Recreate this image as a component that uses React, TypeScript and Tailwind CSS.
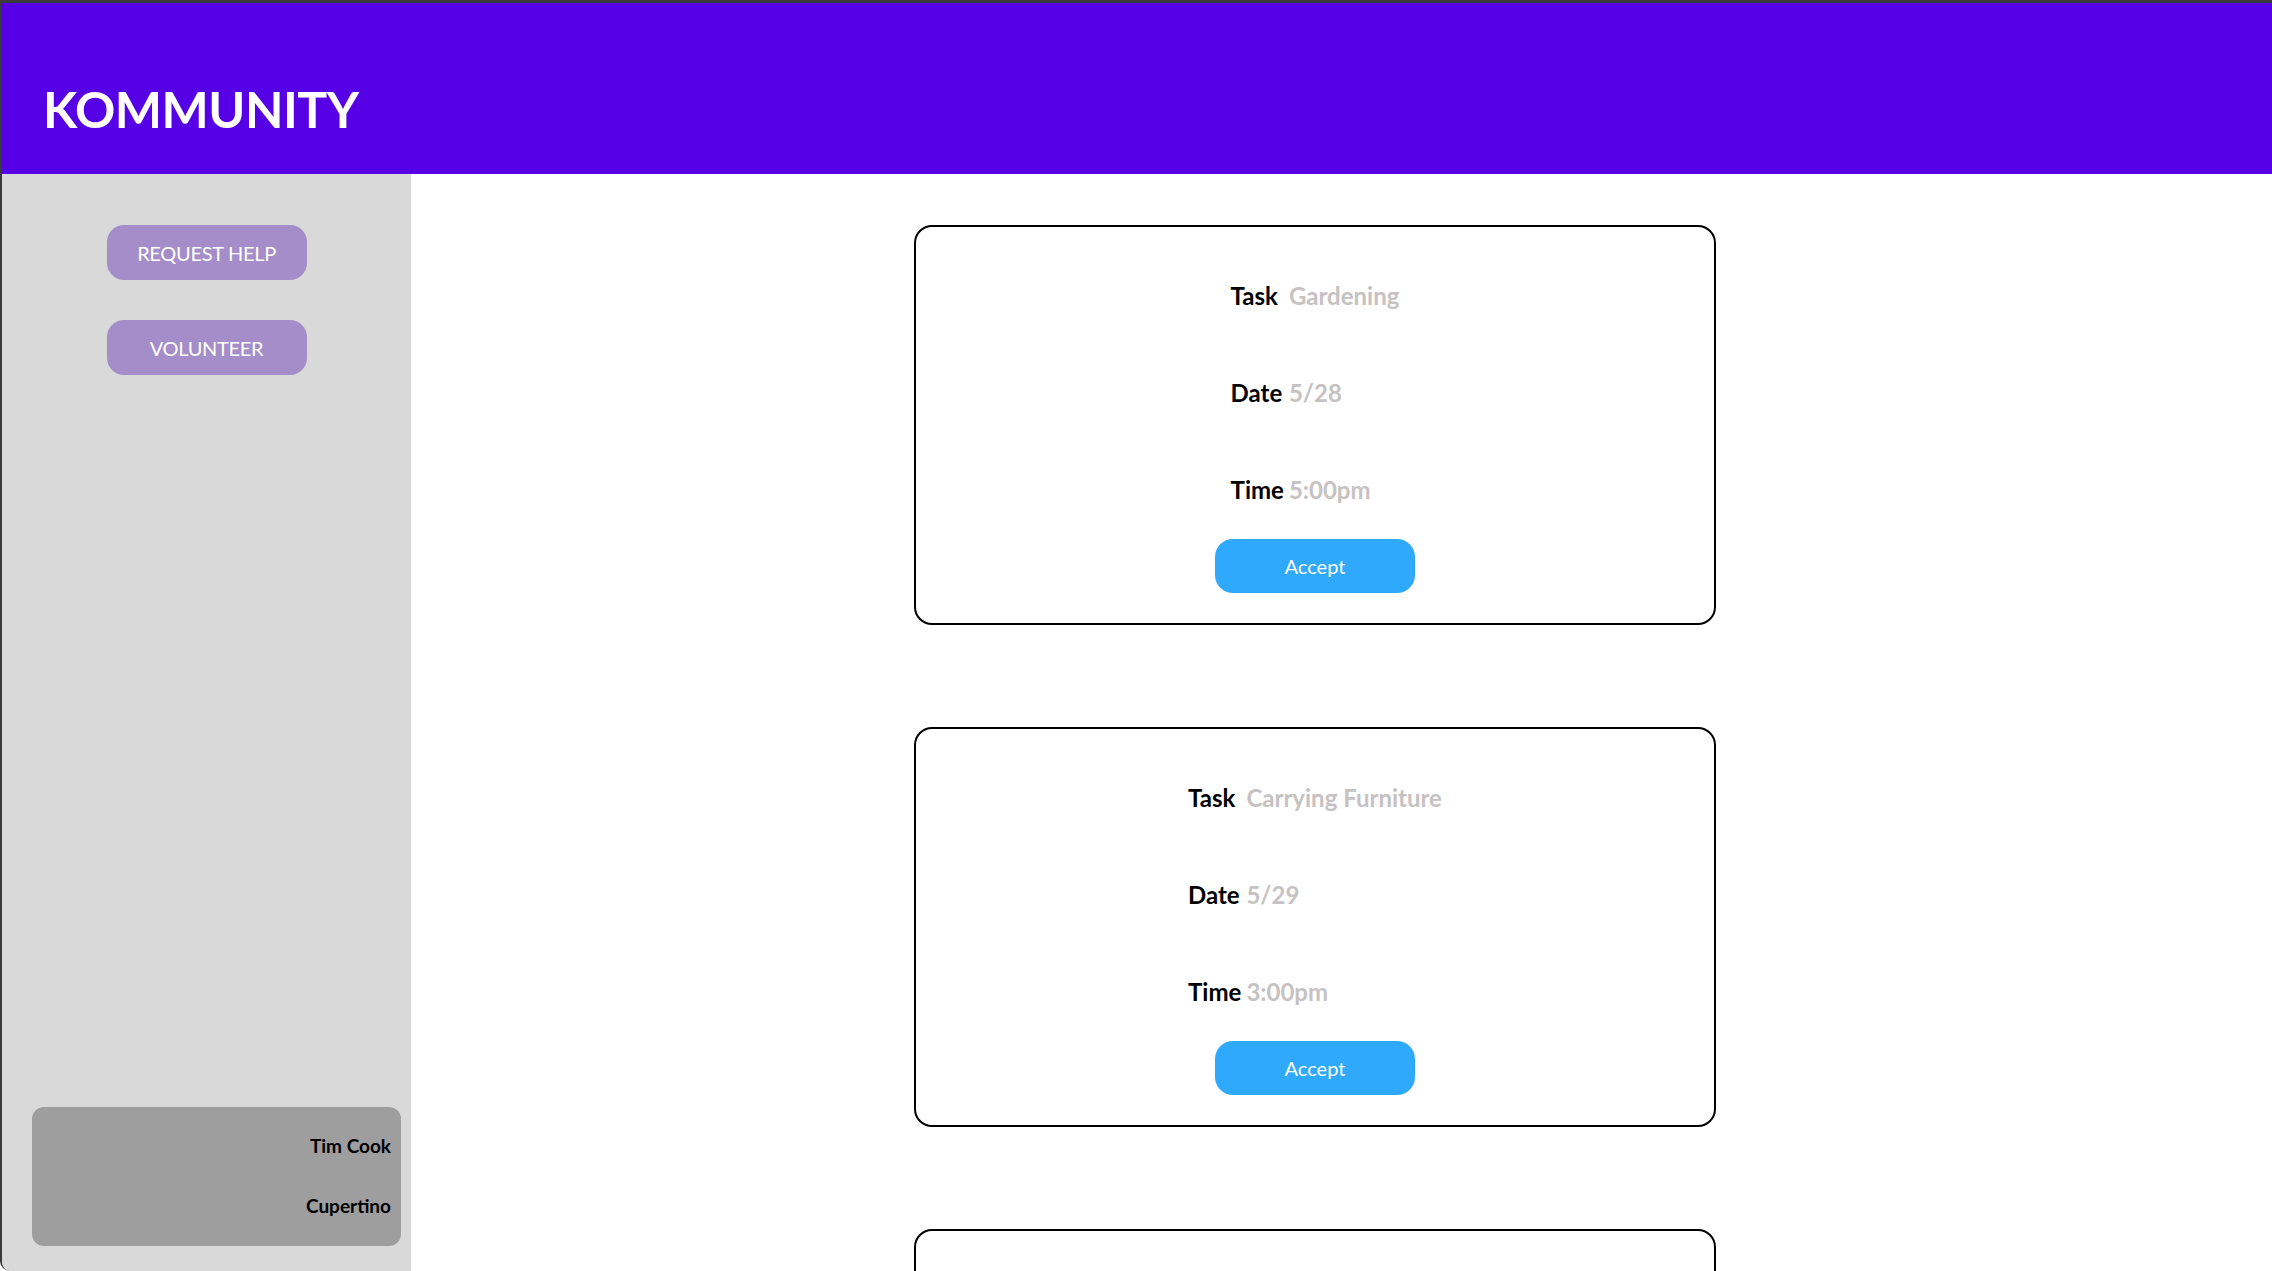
import React from "react";

const font = { fontFamily: "Lato, 'Noto Sans', sans-serif" };

type Task = { task: string; date: string; time: string };

const tasks: Task[] = [
  { task: "Gardening", date: "5/28", time: "5:00pm" },
  { task: "Carrying Furniture", date: "5/29", time: "3:00pm" },
];

function TaskCard({ t }: { t: Task }) {
  return (
    <div className="w-[802px] h-[400px] shrink-0 border-2 border-black rounded-[18px] bg-white flex flex-col items-center pt-[57px]">
      <div className="grid grid-cols-[auto_auto] gap-y-[73px] text-[24px] leading-[24px] font-bold">
        <div className="text-black pr-[5px]">Task</div>
        <div className="text-[#c6c2c2]">{t.task}</div>
        <div className="text-black pr-[5px]">Date</div>
        <div className="text-[#c6c2c2]">{t.date}</div>
        <div className="text-black pr-[5px]">Time</div>
        <div className="text-[#c6c2c2]">{t.time}</div>
      </div>
      <button className="mt-[37px] w-[200px] h-[54px] rounded-[18px] bg-[#2ea9fc] text-white text-[20px] font-normal">
        Accept
      </button>
    </div>
  );
}

export default function App() {
  return (
    <div
      style={font}
      className="w-[2272px] h-[1271px] overflow-hidden flex flex-col bg-white border-t-[3px] border-l-2 border-[#3a3a3a] rounded-bl-[10px]"
    >
      <header className="h-[171px] shrink-0 bg-[#5600e6] flex items-center pl-[41px] pt-[40px]">
        <h1 className="text-white font-bold text-[50px] leading-none tracking-[-0.5px]">KOMMUNITY</h1>
      </header>
      <div className="flex flex-1 min-h-0">
        <aside className="w-[409px] shrink-0 bg-[#d9d9d9] flex flex-col">
          <div className="flex flex-col items-center gap-[40px] pt-[51px]">
            <button className="w-[200px] h-[55px] rounded-[17px] bg-[#a48dc8] text-white text-[20px] tracking-[-0.3px]">
              REQUEST HELP
            </button>
            <button className="w-[200px] h-[55px] rounded-[17px] bg-[#a48dc8] text-white text-[20px] tracking-[-0.3px]">
              VOLUNTEER
            </button>
          </div>
          <div className="mt-auto mb-[25px] ml-[30px] w-[369px] h-[139px] rounded-[12px] bg-[#9e9e9e] flex flex-col items-end pr-[10px] pt-[28px] gap-[38px] text-black font-bold text-[19px] leading-[22px]">
            <div>Tim Cook</div>
            <div>Cupertino</div>
          </div>
        </aside>
        <main className="flex-1 flex flex-col gap-[102px] pl-[503px] pt-[51px]">
          {tasks.map((t, i) => (
            <TaskCard key={i} t={t} />
          ))}
          <div className="w-[802px] h-[400px] shrink-0 border-2 border-black rounded-[18px] bg-white" />
        </main>
      </div>
    </div>
  );
}
